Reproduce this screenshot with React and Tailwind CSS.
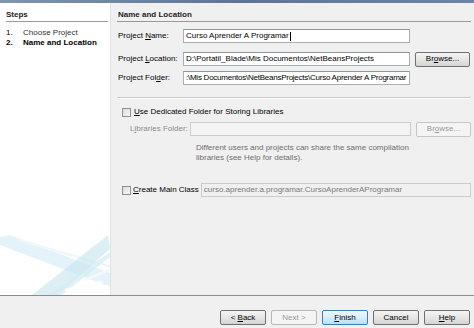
import React from "react";

const font = { fontFamily: '"Liberation Sans", Arial, sans-serif' };

function Check() {
  return (
    <span className="w-[9px] h-[9px] shrink-0 border border-[#8e8f8f] bg-gradient-to-br from-[#dcdcdc] to-[#f8f8f8]" />
  );
}

function Field({ children, disabled, className = "" }) {
  return (
    <div
      className={`h-[14px] flex items-center px-[2px] border whitespace-nowrap overflow-hidden ${
        disabled
          ? "bg-[#f0f0f0] border-[#c9cbcf] text-[#7a7a7a]"
          : "bg-white border-[#a9afb8] border-t-[#8e949c] text-black"
      } ${className}`}
    >
      {children}
    </div>
  );
}

function Btn({ children, variant }) {
  const styles = {
    normal: "border-[#707070] bg-gradient-to-b from-[#f4f4f4] via-[#e6e6e6] to-[#d4d4d4] text-black",
    disabled: "border-[#b5b9bc] bg-[#f4f4f4] text-[#9a9a9a]",
    focus: "border-[#3c7fb1] bg-gradient-to-b from-[#edf7fd] via-[#d5eefc] to-[#b7e1f8] text-black",
  };
  return (
    <div
      className={`w-[46px] h-[15px] flex items-center justify-center border rounded-[2px] shrink-0 whitespace-pre ${styles[variant || "normal"]}`}
    >
      {children}
    </div>
  );
}

function Swoosh() {
  return (
    <svg width="110" height="64" viewBox="0 0 110 64" className="block">
      <polygon points="0,6 10,4 110,42 110,56 0,14" fill="#d9eef6" opacity="0.7" />
      <polygon points="20,8 110,34 110,37 18,10" fill="#eef8fb" />
      <polygon points="32,64 58,64 110,18 108,4" fill="#c4e4ef" opacity="0.6" />
      <polygon points="48,64 62,64 110,26 110,21" fill="#d3ecf4" opacity="0.7" />
      <polygon points="64,58 100,50 104,52 66,60" fill="#ffffff" />
      <polygon points="72,64 108,54 110,56 78,64" fill="#ffffff" />
      <polygon points="84,48 108,38 110,40 86,50" fill="#f2f9fc" />
    </svg>
  );
}

export default function App() {
  return (
    <div className="w-[474px] h-[328px] flex flex-col bg-[#f0f0f0] text-[8px] leading-[10px] text-black overflow-hidden" style={font}>
      {/* top window edge */}
      <div className="h-[3px] bg-gradient-to-r from-[#7f96b1] via-[#5b7593] to-[#6b86a5]" />

      <div className="h-[292px] flex">
        {/* Steps panel */}
        <div className="w-[110px] bg-white flex flex-col">
          <div className="pl-[6px] pr-[2px]">
            <div className="pt-[7px] pb-[1px] font-bold text-[#1c1c1c] border-b border-[#9a9a9a]">Steps</div>
            <div className="mt-[6px] flex">
              <span className="w-[17px]">1.</span>
              <span className="text-[#333]">Choose Project</span>
            </div>
            <div className="flex font-bold">
              <span className="w-[17px]">2.</span>
              <span>Name and Location</span>
            </div>
          </div>
          <div className="mt-auto">
            <Swoosh />
          </div>
        </div>

        {/* Content panel */}
        <div className="flex-1 pl-[6px] pr-[4px] border-l border-[#e2e2e2]">
          <div className="pt-[7px] pb-[1px] pl-[1px] font-bold text-[#1c1c1c] border-b border-[#9a9a9a]">
            Name and Location
          </div>

          <div className="mt-[7px] flex items-center h-[14px]">
            <span className="w-[66px] pl-[1px]">
              Project <u>N</u>ame:
            </span>
            <Field className="w-[227px]">
              Curso Aprender A Programar<span className="ml-px w-px h-[9px] bg-black" />
            </Field>
          </div>

          <div className="mt-[9px] flex items-center h-[14px]">
            <span className="w-[66px] pl-[1px]">
              Project <u>L</u>ocation:
            </span>
            <Field className="w-[227px]">D:\Portatil_Blade\Mis Documentos\NetBeansProjects</Field>
            <div className="ml-[5px]">
              <div className="w-[55px] h-[15px] flex items-center justify-center border rounded-[2px] border-[#707070] bg-gradient-to-b from-[#f4f4f4] via-[#e6e6e6] to-[#d4d4d4]">
                Br<u>o</u>wse...
              </div>
            </div>
          </div>

          <div className="mt-[5px] flex items-center h-[14px]">
            <span className="w-[66px] pl-[1px]">
              Project Fol<u>d</u>er:
            </span>
            <Field className="w-[227px] tracking-[-0.25px]">
              :\Mis Documentos\NetBeansProjects\Curso Aprender A Programar
            </Field>
          </div>

          <div className="mt-[12px] h-px bg-[#c8c8c8] border-b border-white box-content" />

          <div className="mt-[8px] flex items-center h-[10px] pl-[5px] gap-[2px]">
            <Check />
            <span className="ml-[1px]">
              <u>U</u>se Dedicated Folder for Storing Libraries
            </span>
          </div>

          <div className="mt-[5px] flex items-center h-[14px] pl-[13px]">
            <span className="w-[60px] text-[#8a8a8a]">
              L<u>i</u>braries Folder:
            </span>
            <Field disabled className="w-[221px] bg-[#f4f4f4]" />
            <div className="ml-[5px] w-[55px] h-[15px] flex items-center justify-center border rounded-[2px] border-[#c3c6c9] bg-[#f4f4f4] text-[#9a9a9a]">
              Br<u>o</u>wse...
            </div>
          </div>

          <div className="mt-[7px] pl-[79px] text-[#6e6e6e]">
            Different users and projects can share the same compilation
            <br />
            libraries (see Help for details).
          </div>

          <div className="mt-[20px] flex items-center h-[14px] pl-[5px]">
            <Check />
            <span className="ml-[2px] mr-[2px] whitespace-nowrap shrink-0">
              <u>C</u>reate Main Class
            </span>
            <Field disabled className="flex-1">curso.aprender.a.programar.CursoAprenderAProgramar</Field>
          </div>
        </div>
      </div>

      <div className="h-px bg-[#8c8c8c]" />

      <div className="flex-1 flex justify-end items-start pt-[14px] pr-[4px] gap-[5px] bg-[#f0f0f0]">
        <Btn>
          {"< "}
          <u>B</u>ack
        </Btn>
        <Btn variant="disabled">{"Next >"}</Btn>
        <Btn variant="focus">
          <u>F</u>inish
        </Btn>
        <Btn>Cancel</Btn>
        <Btn>
          <u>H</u>elp
        </Btn>
      </div>
    </div>
  );
}
